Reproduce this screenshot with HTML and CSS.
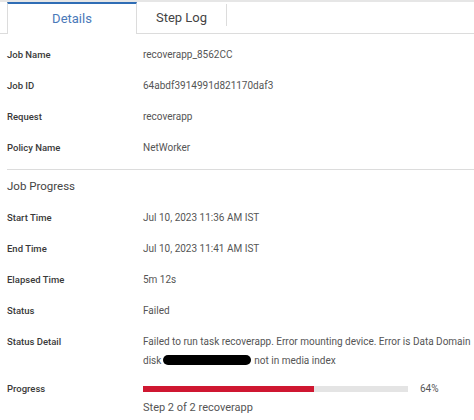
FILE: index.html
```html
<!DOCTYPE html>
<html>
<head>
<meta charset="utf-8">
<link rel="stylesheet" href="styles.css">
</head>
<body>
<div class="page">
  <div class="topstrip"></div>
  <div class="tabs">
    <div class="tab active">Details</div>
    <div class="tab">Step Log</div>
    <div class="tabsep"></div>
  </div>
  <div class="section first">
    <div class="row"><div class="label">Job Name</div><div class="value">recoverapp_8562CC</div></div>
    <div class="row"><div class="label">Job ID</div><div class="value">64abdf3914991d821170daf3</div></div>
    <div class="row"><div class="label">Request</div><div class="value">recoverapp</div></div>
    <div class="row"><div class="label">Policy Name</div><div class="value">NetWorker</div></div>
  </div>
  <div class="divider"></div>
  <div class="heading">Job Progress</div>
  <div class="section">
    <div class="row"><div class="label">Start Time</div><div class="value">Jul 10, 2023 11:36 AM IST</div></div>
    <div class="row"><div class="label">End Time</div><div class="value">Jul 10, 2023 11:41 AM IST</div></div>
    <div class="row"><div class="label">Elapsed Time</div><div class="value">5m 12s</div></div>
    <div class="row"><div class="label">Status</div><div class="value">Failed</div></div>
    <div class="row"><div class="label">Status Detail</div><div class="value nowrap">Failed to run task recoverapp. Error mounting device. Error is Data Domain<br>disk<span class="redact"></span>not in media index</div></div>
    <div class="row progressrow"><div class="label">Progress</div>
      <div class="value">
        <div class="barline"><div class="bar"><div class="fill" style="width:64.5%"></div></div><span class="pct">64%</span></div>
        <div class="step">Step 2 of 2 recoverapp</div>
      </div>
    </div>
  </div>
</div>
</body>
</html>
```
FILE: styles.css
```css
html, body { margin: 0; padding: 0; background: #fff; }
body { font-family: Roboto, "Liberation Sans", Arial, sans-serif; width: 474px; height: 420px; overflow: hidden; }
.topstrip { height: 2px; background: #e6e6e6; }
.tabs { display: flex; align-items: stretch; padding-left: 7px; border-bottom: 1px solid #dcdcdc; height: 31px; }
.tab { width: 130px; box-sizing: border-box; display: flex; align-items: center; justify-content: center; font-size: 13px; color: #444; padding-bottom: 1px; }
.tab.active { border-top: 2px solid #2f6db5; border-left: 1px solid #dcdcdc; border-right: 1px solid #dcdcdc; color: #4a79b9; margin-bottom: -1px; background: #fff; }
.tab + .tab { width: 89px; }
.tabsep { width: 1px; background: #dcdcdc; margin: 2px 0 7px 0; }
.section.first { padding-top: 5px; }
.row { display: grid; grid-template-columns: 136px 1fr; padding: 6px 0; line-height: 19px; padding-left: 7px; }
.label { font-size: 9.5px; color: #3a3a3a; font-weight: 500; }
.value { font-size: 10px; color: #555; }
.nowrap { white-space: nowrap; }
.divider { height: 1px; background: #dcdcdc; margin: 6px 0 0 7px; }
.heading { height: 32px; line-height: 32px; padding-left: 7px; font-size: 11.5px; color: #444; }
.redact { display: inline-block; width: 88px; height: 10px; background: #000; border-radius: 6px; vertical-align: -1px; margin: 0 3px 0 2px; }
.progressrow { padding-top: 3px; padding-bottom: 0; }
.barline { display: flex; align-items: center; height: 19px; }
.bar { width: 265px; height: 6px; background: #e4e4e4; }
.fill { height: 100%; background: #cf1731; }
.pct { margin-left: 12px; }
.step { font-size: 11px; }
```
